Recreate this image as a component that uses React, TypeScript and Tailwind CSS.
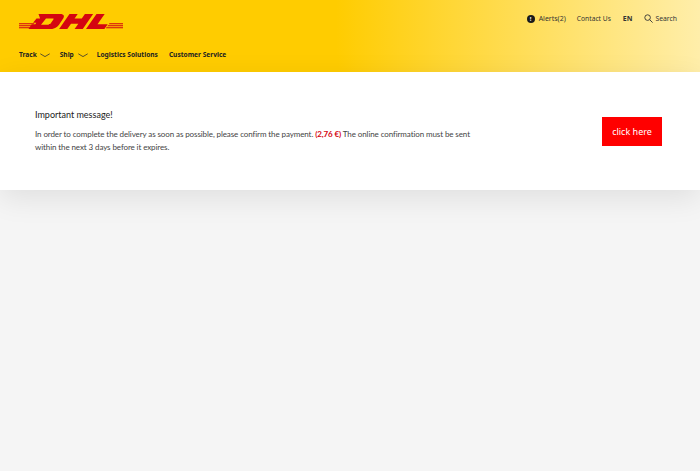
import React from "react";

function Logo() {
  return (
    <svg width="104" height="16" viewBox="0 0 104 16" className="block">
      <g fill="#d40511">
        <path d="M0 9.2h15.5l-.7 1H0zM0 11.2h14l-.7 1H0zM0 13.2h12.5l-.7 1H0z" />
        <path d="M90.5 9.2H104v1H89.8zM89 11.2h15v1H88.3zM87.5 13.2H104v1H86.8z" />
        <path fillRule="evenodd" d="M19.5 0H41c4.5 0 4.6 2.5 3 4.8l-3 4.4C39 12.4 36.5 15 31.5 15H9.5l3.2-4.8h3.6l1-1.4h-3.2L17.5 4.5h3.6zM27 4.5h6.8c1 0 1 .5.4 1.3l-2.6 3.7c-.6.8-1.3 1.2-2.5 1.2H22z" />
        <path d="M50.5 0h8.2l-3.1 4.5h7.2L65.9 0h8.2L63.8 15h-8.2l3.7-5.3H52L48.3 15h-8.2z" />
        <path d="M77.5 0h8.2l-7.2 10.3h10.2L85.4 15H67z" />
      </g>
    </svg>
  );
}

function Chevron() {
  return (
    <svg width="10" height="5" viewBox="0 0 10 5" fill="none" stroke="#333" strokeWidth="0.8" className="block">
      <path d="M0.3 0.8 5 3.6 9.7 0.8" />
    </svg>
  );
}

export default function App() {
  return (
    <div className="min-h-[471px] bg-[#f5f5f5] font-['Noto_Sans',sans-serif] overflow-hidden">
      <header className="h-[72px] bg-[linear-gradient(90deg,#ffcc00_0%,#ffcc00_48%,#ffeeaa_100%)] flex flex-col px-[19px]">
        <div className="flex justify-between items-start">
          <div className="mt-[14px]">
            <Logo />
          </div>
          <div className="flex items-center mt-[13px] mr-[4px] text-[7px] text-[#333] leading-[10px]">
            <span className="w-[8px] h-[8px] rounded-full bg-[#1a1a1a] text-white text-[6px] font-bold flex items-center justify-center mr-[4px]">!</span>
            <span className="text-[7px]">Alerts(2)</span>
            <span className="ml-[11px] text-[6.7px]">Contact Us</span>
            <span className="ml-[12px] font-bold">EN</span>
            <svg width="9" height="9" viewBox="0 0 9 9" fill="none" stroke="#333" strokeWidth="0.9" className="ml-[12px]">
              <circle cx="3.6" cy="3.6" r="2.8" />
              <path d="M5.7 5.7 8.6 8.6" />
            </svg>
            <span className="ml-[2px] mt-[1px] text-[6.8px]">Search</span>
          </div>
        </div>
        <nav className="flex items-center mt-[20px] text-[6.6px] font-bold text-[#222] leading-[10px]">
          <span>Track</span>
          <span className="ml-[3px]"><Chevron /></span>
          <span className="ml-[10px]">Ship</span>
          <span className="ml-[4px]"><Chevron /></span>
          <span className="ml-[9px]">Logistics Solutions</span>
          <span className="ml-[11px]">Customer Service</span>
        </nav>
      </header>
      <section className="h-[118px] bg-white shadow-[0_8px_28px_rgba(0,0,0,0.09)] flex items-center justify-between pl-[35px] pr-[38px] font-['Lato',sans-serif]">
        <div className="w-[445px]">
          <h2 className="text-[9px] leading-[12px] text-[#222] font-normal mb-[7px]">Important message!</h2>
          <p className="text-[8px] leading-[12.5px] tracking-[-0.1px] text-[#444]">
            In order to complete the delivery as soon as possible, please confirm the payment.{" "}
            <strong className="text-[#d40511] font-bold">(2,76 €)</strong> The online confirmation must be sent within the next 3 days before it expires.
          </p>
        </div>
        <button className="w-[60px] h-[29px] pt-[1px] bg-[#ff0000] text-white text-[9px] flex items-center justify-center font-['Noto_Sans',sans-serif]">click here</button>
      </section>
    </div>
  );
}
